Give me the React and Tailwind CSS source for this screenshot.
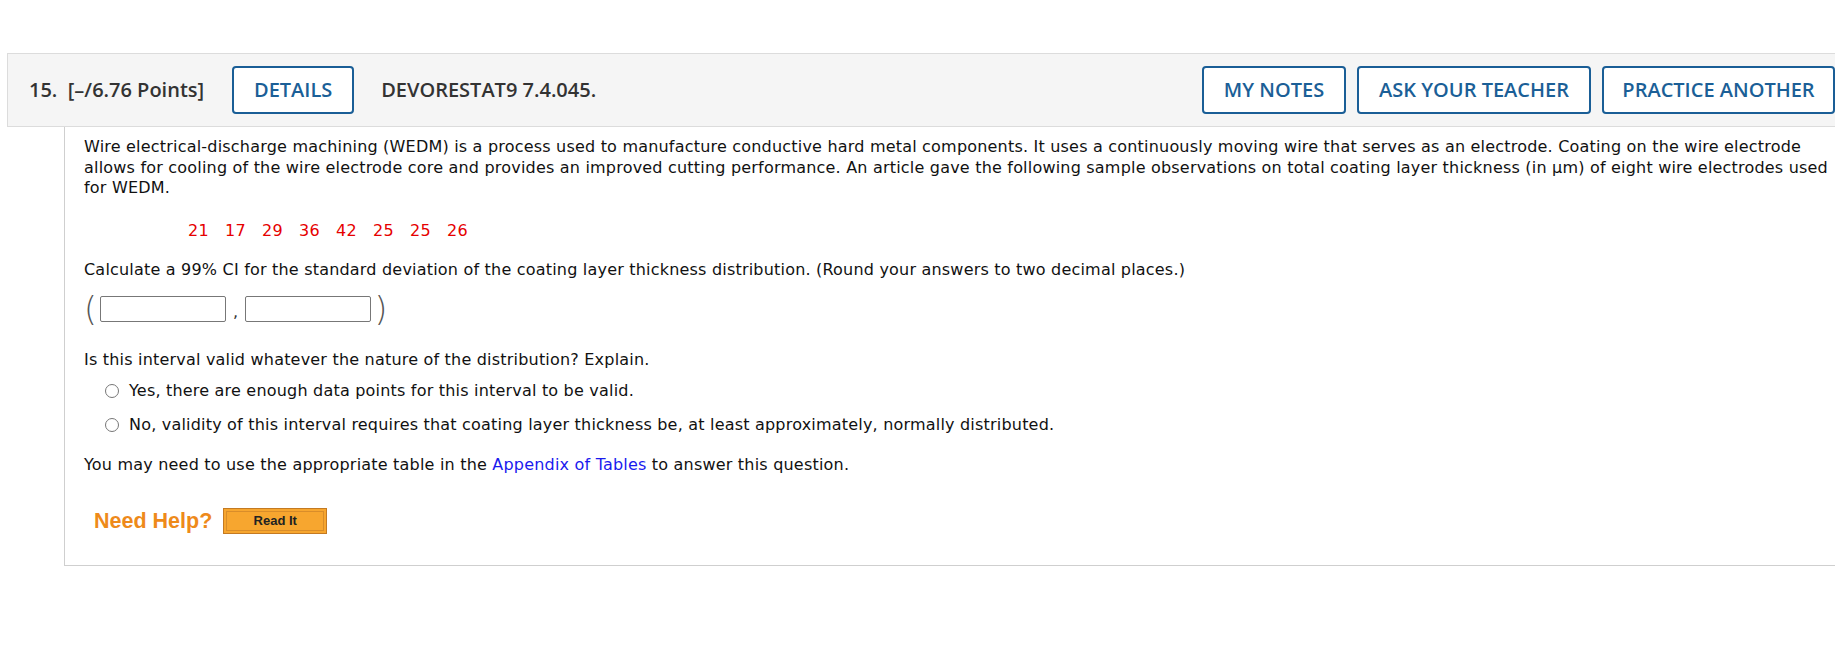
import React from 'react';

const samples = [21, 17, 29, 36, 42, 25, 25, 26];

function HeaderButton({ children, className = '' }) {
  return (
    <button
      className={`h-[48px] rounded-[4px] border-2 border-[#1a5e96] bg-white text-[20px] font-semibold uppercase text-[#1b5f97] ${className}`}>
      {children}
    </button>
  );
}

function Radio({ children }) {
  return (
    <label className="flex items-center gap-[10px] pl-[21px]">
      <span className="h-[14px] w-[14px] rounded-full border border-[#777] bg-white" />
      <span>{children}</span>
    </label>
  );
}

export default function App() {
  return (
    <div className="min-h-[651px] bg-white pt-[53px] font-['DejaVu_Sans',Verdana,sans-serif] text-[16px] leading-[20px] tracking-[0.2px] text-[#111]">
      {/* question header */}
      <div className="ml-[7px] flex h-[74px] items-center border border-r-0 border-[#dcdcdc] bg-[#f5f5f5] pl-[21px] font-['Open_Sans',sans-serif] tracking-normal text-[#333]">
        <span className="text-[20px] font-semibold">15.&nbsp; [–/6.76 Points]</span>
        <HeaderButton className="ml-[28px] w-[122px]">Details</HeaderButton>
        <span className="ml-[27px] text-[20px] font-semibold">DEVORESTAT9 7.4.045.</span>
        <div className="ml-auto flex gap-[11px]">
          <HeaderButton className="w-[144px]">My Notes</HeaderButton>
          <HeaderButton className="w-[234px]">Ask Your Teacher</HeaderButton>
          <HeaderButton className="w-[233px]">Practice Another</HeaderButton>
        </div>
      </div>

      {/* question body */}
      <div className="ml-[64px] border-b border-l border-[#cfcfcf] pb-[31px] pl-[19px] pt-[10px]">
        <p className="whitespace-nowrap leading-[20.5px]">
          Wire electrical-discharge machining (WEDM) is a process used to manufacture conductive hard metal components. It uses a continuously moving wire that serves as an electrode. Coating on the wire electrode
          <br />
          allows for cooling of the wire electrode core and provides an improved cutting performance. An article gave the following sample observations on total coating layer thickness (in μm) of eight wire electrodes used
          <br />
          for WEDM.
        </p>

        <div className="ml-[104px] mt-[22px] flex text-[#e60000]">
          {samples.map((n, i) => (
            <span key={i} className="w-[37px]">
              {n}
            </span>
          ))}
        </div>

        <p className="mt-[19px]">
          Calculate a 99% CI for the standard deviation of the coating layer thickness distribution. (Round your answers to two decimal places.)
        </p>

        <div className="mt-[13px] flex items-center">
          <span className="text-[33px] font-extralight leading-none text-[#555]">(</span>
          <input className="ml-[3px] h-[26px] w-[126px] rounded-[2px] border border-[#777] bg-white" />
          <span className="mx-[7px] mt-[6px] text-[#333]">,</span>
          <input className="h-[26px] w-[126px] rounded-[2px] border border-[#777] bg-white" />
          <span className="ml-[3px] text-[33px] font-extralight leading-none text-[#555]">)</span>
        </div>

        <p className="mt-[24px]">Is this interval valid whatever the nature of the distribution? Explain.</p>
        <div className="mt-[11px] flex flex-col gap-[14px]">
          <Radio>Yes, there are enough data points for this interval to be valid.</Radio>
          <Radio>No, validity of this interval requires that coating layer thickness be, at least approximately, normally distributed.</Radio>
        </div>

        <p className="mt-[20px]">
          You may need to use the appropriate table in the{' '}
          <a className="text-[#1a1aee]">Appendix of Tables</a> to answer this question.
        </p>

        <div className="ml-[10px] mt-[33px] flex items-center gap-[11px] tracking-normal">
          <span className="font-['Liberation_Sans',Arial,sans-serif] text-[21.5px] font-bold text-[#ee8a1a]">Need Help?</span>
          <button className="h-[26px] w-[104px] border border-[#c47a22] bg-[#f7a62f] p-[2px]">
            <span className="flex h-full w-full items-center justify-center border border-[#d98d2a] font-['Liberation_Sans',Arial,sans-serif] text-[13px] font-bold text-[#222]">
              Read It
            </span>
          </button>
        </div>
      </div>
    </div>
  );
}
